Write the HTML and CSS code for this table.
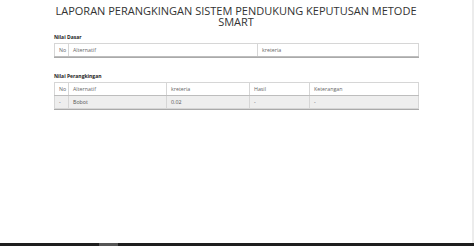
FILE: index.html
```html
<!DOCTYPE html>
<html>
<head>
<meta charset="utf-8">
<link rel="stylesheet" href="styles.css">
</head>
<body>
<div class="screen">
  <div class="page">
    <main class="report">
      <h1 class="title">LAPORAN PERANGKINGAN SISTEM PENDUKUNG KEPUTUSAN METODE SMART</h1>
      <h2 class="label">Nilai Dasar</h2>
      <table class="tbl">
        <colgroup><col class="w-no"><col class="w-alt1"><col></colgroup>
        <thead>
          <tr><th class="first">No</th><th>Alternatif</th><th>kreteria</th></tr>
        </thead>
      </table>
      <h2 class="label label-2">Nilai Perangkingan</h2>
      <table class="tbl">
        <colgroup><col class="w-no"><col class="w-alt2"><col class="w-kre"><col class="w-has"><col></colgroup>
        <thead>
          <tr><th class="first">No</th><th>Alternatif</th><th>kreteria</th><th>Hasil</th><th>Keterangan</th></tr>
        </thead>
        <tbody>
          <tr><td class="first">-</td><td>Bobot</td><td>0.02</td><td>-</td><td>-</td></tr>
        </tbody>
      </table>
    </main>
    <div class="scroll"></div>
  </div>
  <div class="taskbar"><span class="task"></span></div>
</div>
</body>
</html>
```

FILE: styles.css
```css
html, body {
  margin: 0;
  padding: 0;
  background: #fff;
}
body {
  font-family: "Open Sans", "Noto Sans", sans-serif;
  color: #444;
}
.screen {
  display: flex;
  flex-direction: column;
  height: 246px;
  overflow: hidden;
}
.page {
  flex: 1;
  display: flex;
}
.report {
  flex: 1;
  display: flex;
  flex-direction: column;
  align-items: center;
  padding-top: 6px;
}
.scroll {
  width: 2px;
  background: #ececec;
}
.title {
  margin: 0;
  width: 380px;
  font-size: 11px;
  line-height: 10.5px;
  font-weight: 400;
  text-align: center;
  color: #333;
}
.label {
  align-self: flex-start;
  margin: 7px 0 0 54px;
  font-size: 5px;
  line-height: 7px;
  font-weight: 700;
  color: #222;
}
.label-2 {
  margin-top: 16px;
}
.tbl {
  align-self: flex-start;
  margin: 2px 0 0 54px;
  width: 365px;
  table-layout: fixed;
  border-collapse: collapse;
  font-size: 5.3px;
  color: #666;
  box-shadow: 0 1px 0 #aaa;
}
.w-no { width: 14px; }
.w-alt1 { width: 189px; }
.w-alt2 { width: 98px; }
.w-kre { width: 83px; }
.w-has { width: 60px; }
.tbl th, .tbl td {
  border: 1px solid #d6d6d6;
  height: 12px;
  padding: 0 4px;
  text-align: left;
  font-weight: 400;
  line-height: 12px;
  white-space: nowrap;
  overflow: hidden;
}
.tbl th.first, .tbl td.first {
  padding: 0 1px 0 4px;
}
.tbl thead th {
  border-bottom: 1px solid #bdbdbd;
}
.tbl tbody td {
  background: #eeeeee;
  color: #555;
}
.taskbar {
  height: 3px;
  background: #1e1e1e;
  display: flex;
}
.task {
  margin-left: 99px;
  width: 19px;
  background: #555;
}
```
